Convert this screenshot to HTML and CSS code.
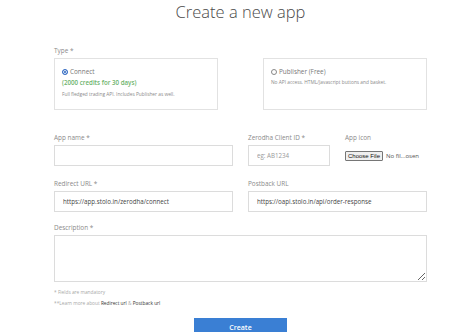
FILE: index.html
```html
<!DOCTYPE html>
<html>
<head>
	<meta charset="utf-8">
	<title>Create a new app</title>
	<link rel="stylesheet" href="styles.css">
</head>
<body>
	<div class="page">
		<h1 class="title">Create a new app</h1>

		<form class="app-form">
			<div class="label type-label">Type *</div>
			<div class="type-row">
				<label class="type-box">
					<span class="type-head"><span class="radio checked"></span>Connect</span>
					<span class="credits">(2000 credits for 30 days)</span>
					<span class="type-desc">Full fledged trading API. Includes Publisher as well.</span>
				</label>
				<label class="type-box">
					<span class="type-head"><span class="radio"></span>Publisher (Free)</span>
					<span class="type-desc">No API access. HTML/Javascript buttons and basket.</span>
				</label>
			</div>

			<div class="field-row">
				<div class="field">
					<div class="label">App name *</div>
					<input class="text-input" type="text">
				</div>
				<div class="field-pair">
					<div class="field">
						<div class="label">Zerodha Client ID *</div>
						<input class="text-input" type="text" placeholder="eg: AB1234">
					</div>
					<div class="field">
						<div class="label">App icon</div>
						<div class="file-picker">
							<span class="file-btn">Choose File</span>
							<span class="file-name">No fil...osen</span>
						</div>
					</div>
				</div>
			</div>

			<div class="field-row">
				<div class="field">
					<div class="label">Redirect URL *</div>
					<input class="text-input" type="text" value="https://app.stolo.in/zerodha/connect">
				</div>
				<div class="field">
					<div class="label">Postback URL</div>
					<input class="text-input" type="text" value="https://oapi.stolo.in/api/order-response">
				</div>
			</div>

			<div class="field">
				<div class="label">Description *</div>
				<textarea class="text-area"></textarea>
			</div>

			<div class="notes">
				<p>* Fields are mandatory</p>
				<p>**Learn more about <a href="#">Redirect url</a> &amp; <a href="#">Postback url</a></p>
			</div>

			<div class="actions">
				<button class="create-btn" type="button">Create</button>
			</div>
		</form>
	</div>
</body>
</html>
```

FILE: styles.css
```css
html, body {
	margin: 0;
	padding: 0;
	background: #fff;
	font-family: "Open Sans", "Liberation Sans", sans-serif;
	overflow: hidden;
}

.page {
	width: 373px;
	margin-left: 54px;
}

.title {
	margin: 0;
	height: 28px;
	line-height: 24px;
	font-size: 16.5px;
	font-weight: 300;
	color: #4a4a4a;
	text-align: center;
}

.app-form {
	margin-top: 18px;
}

.label {
	font-size: 6.4px;
	line-height: 10px;
	color: #8a8a8a;
	margin-bottom: 2px;
}

/* type selector */
.type-row {
	display: grid;
	grid-template-columns: 1fr 1fr;
	gap: 45px;
}
.type-box {
	display: flex;
	flex-direction: column;
	height: 52px;
	box-sizing: border-box;
	border: 1px solid #e2e2e2;
	padding: 8px 7px 0 7px;
}
.type-head {
	display: flex;
	align-items: center;
	font-size: 6.4px;
	line-height: 9px;
	color: #777;
}
.radio {
	width: 4px;
	height: 4px;
	border: 1px solid #888;
	border-radius: 50%;
	margin-right: 2px;
	background: #fff;
}
.radio.checked {
	border-color: #3a6fc4;
	background: #1f5fbf;
	box-shadow: inset 0 0 0 1px #fff;
}
.credits {
	margin-top: 2px;
	font-size: 6.2px;
	line-height: 9px;
	font-weight: 600;
	color: #6bb36b;
}
.type-desc {
	margin-top: 4px;
	font-size: 4.8px;
	line-height: 7px;
	color: #8a8a8a;
}
.type-box:last-child .type-desc {
	margin-top: 3px;
}

/* fields */
.field-row {
	display: grid;
	grid-template-columns: 1fr 1fr;
	gap: 15px;
	margin-top: 23px;
}
.field-row + .field-row {
	margin-top: 13px;
}
.field-pair {
	display: grid;
	grid-template-columns: 82px 1fr;
	gap: 15px;
}
.field {
	display: flex;
	flex-direction: column;
}
.text-input {
	height: 21px;
	box-sizing: border-box;
	border: 1px solid #dcdcdc;
	padding: 0 8px;
	font-family: "Open Sans", "Liberation Sans", sans-serif;
	font-size: 6.2px;
	color: #444;
	outline: none;
	width: 100%;
}
.text-input::placeholder {
	color: #999;
}
.file-picker {
	display: flex;
	align-items: center;
	height: 21px;
}
.file-btn {
	font-family: "Liberation Sans", sans-serif;
	font-size: 6px;
	line-height: 8px;
	padding: 0 2px;
	background: #efefef;
	border: 1px solid #767676;
	border-radius: 1px;
	color: #111;
}
.file-name {
	margin-left: 3px;
	font-size: 6px;
	color: #555;
}

.field-row + .field {
	margin-top: 11px;
}
.text-area {
	height: 47px;
	box-sizing: border-box;
	border: 1px solid #dcdcdc;
	resize: vertical;
	outline: none;
}

.notes {
	margin-top: 5px;
	font-size: 4.8px;
	color: #a8a8a8;
}
.notes p {
	margin: 0;
	line-height: 11px;
}
.notes a {
	color: #333;
	text-decoration: none;
}

.actions {
	display: flex;
	justify-content: center;
	margin-top: 9px;
}
.create-btn {
	width: 93px;
	height: 19px;
	border: none;
	background: #3a7fd4;
	color: #fff;
	font-family: "Open Sans", "Liberation Sans", sans-serif;
	font-size: 7px;
	font-weight: 600;
	padding: 0;
}
```
